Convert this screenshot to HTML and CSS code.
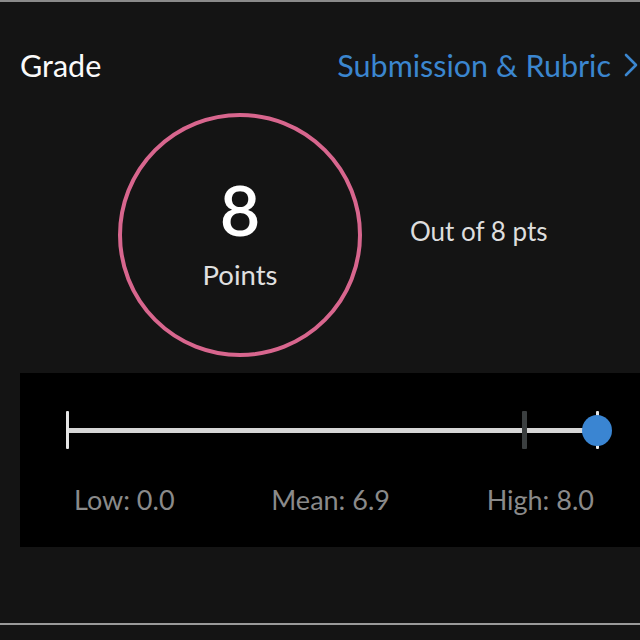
FILE: index.html
```html
<!DOCTYPE html>
<html lang="en">
<head>
    <meta charset="UTF-8">
    <title>Grade</title>
    <link rel="stylesheet" href="styles.css">
</head>
<body>
    <div class="screen">
        <div class="header">
            <span class="title">Grade</span>
            <span class="link">Submission &amp; Rubric
                <svg class="chev" width="14" height="24" viewBox="0 0 14 24"><path d="M2 2 L12 12 L2 22" fill="none" stroke="#3b86cf" stroke-width="2.6" stroke-linecap="round" stroke-linejoin="round"/></svg>
            </span>
        </div>

        <div class="score">
            <div class="ring">
                <div class="big">8</div>
                <div class="unit">Points</div>
            </div>
            <div class="outof">Out of 8 pts</div>
        </div>

        <div class="stats">
            <div class="track">
                <div class="line"></div>
                <div class="tick low"></div>
                <div class="tick mean"></div>
                <div class="tick high"></div>
                <div class="knob"></div>
            </div>
            <div class="labels">
                <span>Low: 0.0</span>
                <span>Mean: 6.9</span>
                <span>High: 8.0</span>
            </div>
        </div>
    </div>
</body>
</html>
```

FILE: styles.css
```css
body {
    margin: 0;
    background: #141414;
    font-family: Lato, "Open Sans", sans-serif;
}
.screen {
    width: 640px;
    height: 640px;
    box-sizing: border-box;
    border-top: 2px solid #8a8a8a;
    position: relative;
    overflow: hidden;
}
.screen::after {
    content: "";
    position: absolute;
    left: 0;
    right: 0;
    top: 621px;
    height: 2px;
    background: #9a9a9a;
}
.header {
    display: flex;
    justify-content: space-between;
    align-items: center;
    padding: 44px 2px 0 20px;
    height: 38px;
}
.title {
    color: #fafafa;
    font-size: 30.5px;
}
.link {
    color: #3b86cf;
    font-size: 30.5px;
    display: flex;
    align-items: center;
    gap: 13px;
}
.score {
    display: flex;
    align-items: center;
    margin-top: 29px;
    padding-left: 118px;
}
.ring {
    width: 244px;
    height: 244px;
    box-sizing: border-box;
    border: 4px solid #d8668e;
    border-radius: 50%;
    display: flex;
    flex-direction: column;
    align-items: center;
    padding-top: 50px;
}
.big {
    color: #fff;
    font-size: 70px;
    font-weight: 600;
    line-height: 84px;
}
.unit {
    color: #e0e0e0;
    font-size: 27.5px;
    margin-top: 7px;
}
.outof {
    color: #dedede;
    font-size: 26px;
    margin-left: 48px;
    margin-top: -8px;
}
.stats {
    margin: 16px 0 0 20px;
    height: 174px;
    background: #000;
    padding-top: 38px;
    box-sizing: border-box;
}
.track {
    position: relative;
    height: 38px;
    margin-left: 46px;
    width: 548px;
}
.line {
    position: absolute;
    left: 0;
    right: 14px;
    top: 17px;
    height: 5px;
    background: #d6d6d6;
}
.tick {
    position: absolute;
    top: 0;
    width: 3px;
    height: 38px;
    border-radius: 1px;
}
.tick.low {
    left: 0;
    background: #e6e6e6;
}
.tick.mean {
    left: 456px;
    width: 5px;
    background: #3b3f40;
}
.tick.high {
    left: 530px;
    background: #e6e6e6;
}
.knob {
    position: absolute;
    left: 516px;
    top: 4px;
    width: 30px;
    height: 31px;
    border-radius: 50%;
    background: #3a85d2;
}
.labels {
    display: flex;
    justify-content: space-between;
    margin: 34px 46px 0 54px;
    color: #8a8a8a;
    font-size: 27px;
}
```
